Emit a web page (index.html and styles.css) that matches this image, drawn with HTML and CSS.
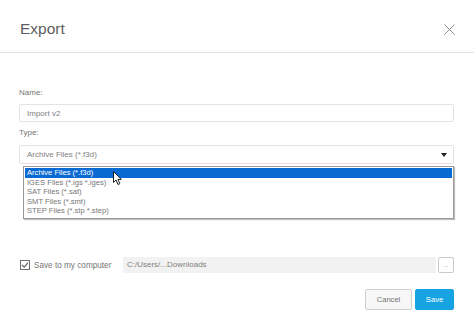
FILE: index.html
```html
<!DOCTYPE html>
<html lang="en">
<head>
  <meta charset="UTF-8">
  <meta name="viewport" content="width=device-width, initial-scale=1.0">
  <title>Export</title>
  <link rel="stylesheet" href="styles.css">
</head>
<body>
  <div class="dialog">
    <div class="header">
      <h1>Export</h1>
      <svg class="close" width="11" height="11" viewBox="0 0 11 11">
        <path d="M0.5 0.5 L10.5 10.5 M10.5 0.5 L0.5 10.5" stroke="#8a8a8a" stroke-width="1" fill="none"/>
      </svg>
    </div>
    <div class="content">
      <label class="label">Name:</label>
      <div class="input">Import v2</div>
      <label class="label">Type:</label>
      <div class="select-wrap">
        <div class="select">
          <span>Archive Files (*.f3d)</span>
          <span class="arrow"></span>
        </div>
        <!-- opened dropdown list -->
        <ul class="options">
          <li class="active">Archive Files (*.f3d)</li>
          <li>IGES Files (*.igs *.iges)</li>
          <li>SAT Files (*.sat)</li>
          <li>SMT Files (*.smt)</li>
          <li>STEP Files (*.stp *.step)</li>
        </ul>
        <svg class="cursor" width="10" height="15" viewBox="0 0 10 15">
          <path d="M0.5 0.5 L0.5 11.5 L3 9 L5 13.5 L6.8 12.7 L4.9 8.4 L8.3 8.4 Z" fill="#fff" stroke="#222" stroke-width="1" stroke-linejoin="round"/>
        </svg>
      </div>
      <div class="save-row">
        <label class="check">
          <svg width="10" height="10" viewBox="0 0 10 10">
            <rect x="0.5" y="0.5" width="9" height="9" fill="#fff" stroke="#707070"/>
            <path d="M2 5 L4.2 7.2 L8 2.6" stroke="#606060" stroke-width="1.1" fill="none"/>
          </svg>
          Save to my computer
        </label>
        <div class="path">C:/Users/...Downloads</div>
        <button class="browse">...</button>
      </div>
      <div class="footer">
        <button class="btn cancel">Cancel</button>
        <button class="btn save">Save</button>
      </div>
    </div>
  </div>
</body>
</html>
```

FILE: styles.css
```css
body {
  margin: 0;
  background-color: #fff;
  font-family: "Liberation Sans", Arial, sans-serif;
  color: #7a7a7a;
}
.dialog {
  width: 474px;
  height: 334px;
  overflow: hidden;
}
.header {
  height: 52px;
  display: flex;
  align-items: center;
  justify-content: space-between;
  padding: 0 19px 0 20px;
  border-bottom: 1px solid #e2e2e2;
}
.header h1 {
  margin: 6px 0 0 0;
  font-size: 15.5px;
  font-weight: normal;
  color: #5e5e5e;
}
.close {
  margin-top: 6px;
}
.content {
  padding: 35px 20px 0 19px;
  font-size: 8px;
}
.label {
  display: block;
  height: 10px;
  line-height: 10px;
  color: #757575;
}
.input {
  height: 18px;
  line-height: 18px;
  margin: 6px 0 6px 0;
  padding-left: 7px;
  border: 1px solid #e4e4e4;
  border-radius: 2px;
  box-sizing: border-box;
  color: #808080;
}
.select-wrap {
  position: relative;
  margin-top: 7px;
}
.select {
  height: 19px;
  display: flex;
  align-items: center;
  justify-content: space-between;
  padding: 0 6px 0 7px;
  border: 1px solid #e4e4e4;
  border-bottom-color: #ecdcdc;
  border-radius: 2px;
  box-sizing: border-box;
  color: #808080;
}
.arrow {
  width: 0;
  height: 0;
  border-left: 3px solid transparent;
  border-right: 3px solid transparent;
  border-top: 4px solid #222;
}
.options {
  position: absolute;
  top: 21px;
  left: 4px;
  right: 0;
  margin: 0;
  padding: 1px 1px 2px 1px;
  list-style: none;
  background-color: #fff;
  border: 1px solid #9a9a9a;
  box-shadow: 1px 1px 1px rgba(0, 0, 0, 0.25);
  font-size: 7.6px;
  color: #777;
}
.options li {
  height: 9.6px;
  line-height: 9.6px;
  padding-left: 2px;
}
.options li.active {
  background-color: #0a6ad4;
  color: #fff;
}
.cursor {
  position: absolute;
  top: 26px;
  left: 94px;
}
.save-row {
  display: flex;
  align-items: center;
  margin-top: 93px;
  height: 16px;
}
.check {
  display: flex;
  align-items: center;
  gap: 4px;
  width: 103px;
  padding-left: 1px;
  font-size: 8.2px;
  color: #757575;
}
.path {
  flex: 1;
  height: 16px;
  line-height: 16px;
  padding-left: 4px;
  background-color: #f2f2f2;
  color: #808080;
}
.browse {
  width: 16px;
  height: 16px;
  margin-left: 2px;
  padding: 0;
  border: 1px solid #c8c8c8;
  border-radius: 2px;
  background-color: #fff;
  font-size: 6px;
  line-height: 8px;
  color: #888;
}
.footer {
  display: flex;
  justify-content: flex-end;
  gap: 3px;
  margin-top: 16px;
}
.btn {
  height: 21px;
  padding: 0;
  border-radius: 2px;
  font-family: "Liberation Sans", Arial, sans-serif;
  font-size: 7.6px;
}
.cancel {
  width: 47px;
  border: 1px solid #cfcfcf;
  background-color: #f7f7f7;
  color: #707070;
}
.save {
  width: 39px;
  border: 1px solid #17a3e2;
  background-color: #17a3e2;
  color: #fff;
}
```
